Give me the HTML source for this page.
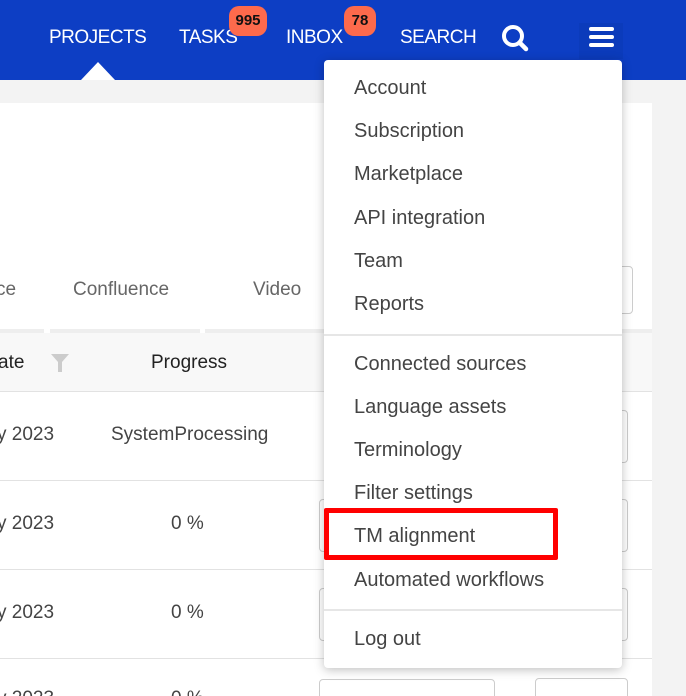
<!DOCTYPE html>
<html style="overflow:hidden;height:696px"><head><style>
html,body{height:696px}
body{margin:0;width:686px;overflow:hidden;background:#f3f3f3;font-family:"Liberation Sans",sans-serif;position:relative}
.hdr{position:absolute;left:0;top:0;width:686px;height:80px;background:#0d3ec4}
.n{position:absolute;top:27px;color:#fff;font-size:19px}
.badge{position:absolute;background:#fd6a4c;color:#111;font-size:15px;font-weight:bold;border-radius:10px;height:30px;line-height:30px;text-align:center}
.card{position:absolute;left:0;top:103px;width:652px;height:593px;background:#fff}
.t{position:absolute;font-size:19px;color:#666}
.row{position:absolute;left:0;width:652px;border-top:1px solid #e2e2e2}
.c{position:absolute;font-size:19px;color:#444}
.btn{position:absolute;border:1px solid #ccc;border-radius:4px;background:#fff}
.menu{position:absolute;left:324px;top:60px;width:298px;height:608px;background:#fff;border-radius:4px;box-shadow:0 2px 10px rgba(0,0,0,.25)}
.mi{position:absolute;left:30px;font-size:20px;color:#444}
.div{position:absolute;left:0;width:298px;border-top:2px solid #e6e6e6}
</style></head><body>
<div class="hdr">
<div class="n" style="left:49px;letter-spacing:-0.5px">PROJECTS</div>
<div class="n" style="left:179px;letter-spacing:-0.5px">TASKS</div>
<div class="badge" style="left:229px;top:6px;width:38px">995</div>
<div class="n" style="left:286px;letter-spacing:-0.5px">INBOX</div>
<div class="badge" style="left:344px;top:6px;width:32px">78</div>
<div class="n" style="left:400px;letter-spacing:-0.5px">SEARCH</div>
<svg style="position:absolute;left:498px;top:21px" width="34" height="34" viewBox="0 0 34 34"><circle cx="15" cy="15" r="9" fill="none" stroke="#fff" stroke-width="4"/><line x1="21.5" y1="21.5" x2="28" y2="28" stroke="#fff" stroke-width="4.5" stroke-linecap="round"/></svg>
<div style="position:absolute;left:579px;top:23px;width:44px;height:36px;background:#0b3bbb"></div>
<div style="position:absolute;left:589px;top:27px;width:25px;height:4px;background:#fff;border-radius:2px"></div>
<div style="position:absolute;left:589px;top:35px;width:25px;height:4px;background:#fff;border-radius:2px"></div>
<div style="position:absolute;left:589px;top:43px;width:25px;height:4px;background:#fff;border-radius:2px"></div>
<div style="position:absolute;left:81px;top:62px;width:0;height:0;border-left:17px solid transparent;border-right:17px solid transparent;border-bottom:18px solid #fff"></div>
</div>
<div class="card"></div>
<div class="t" style="left:-4px;top:279px">ce</div>
<div class="t" style="left:73px;top:279px">Confluence</div>
<div class="t" style="left:253px;top:279px">Video</div>
<div style="position:absolute;left:0;top:329px;width:44px;height:4px;background:#eee"></div>
<div style="position:absolute;left:50px;top:329px;width:150px;height:4px;background:#eee"></div>
<div style="position:absolute;left:205px;top:329px;width:447px;height:4px;background:#eee"></div>
<div class="btn" style="left:560px;top:266px;width:71px;height:46px"></div>
<div style="position:absolute;left:0;top:333px;width:652px;height:58px;background:#f8f8f8"></div>
<div class="c" style="left:-2px;top:352px;color:#222">ate</div>
<svg style="position:absolute;left:50px;top:353px" width="20" height="20"><path d="M1 1H19L12 9V19H8V9Z" fill="#ccc"/></svg>
<div class="c" style="left:151px;top:352px;color:#222">Progress</div>
<div class="row" style="top:391px"></div>
<div class="row" style="top:480px"></div>
<div class="row" style="top:569px"></div>
<div class="row" style="top:658px"></div>
<div class="c" style="left:-3px;top:424px">y 2023</div><div class="c" style="left:111px;top:424px">SystemProcessing</div>
<div class="c" style="left:-3px;top:513px">y 2023</div><div class="c" style="left:171px;top:513px">0 %</div>
<div class="c" style="left:-3px;top:602px">y 2023</div><div class="c" style="left:171px;top:602px">0 %</div>
<div class="c" style="left:-3px;top:688px">y 2023</div><div class="c" style="left:171px;top:688px">0 %</div>
<div class="btn" style="left:560px;top:410px;width:66px;height:51px"></div>
<div class="btn" style="left:560px;top:499px;width:66px;height:51px"></div>
<div class="btn" style="left:560px;top:588px;width:66px;height:51px"></div>
<div class="btn" style="left:319px;top:588px;width:20px;height:51px"></div>
<div class="btn" style="left:319px;top:499px;width:20px;height:51px"></div>
<div class="btn" style="left:319px;top:679px;width:174px;height:40px"></div>
<div class="btn" style="left:535px;top:678px;width:91px;height:40px"></div>
<div class="menu">
<div class="mi" style="top:17px">Account</div>
<div class="mi" style="top:60px">Subscription</div>
<div class="mi" style="top:103px">Marketplace</div>
<div class="mi" style="top:147px">API integration</div>
<div class="mi" style="top:190px">Team</div>
<div class="mi" style="top:233px">Reports</div>
<div class="div" style="top:274px"></div>
<div class="mi" style="top:293px">Connected sources</div>
<div class="mi" style="top:336px">Language assets</div>
<div class="mi" style="top:379px">Terminology</div>
<div class="mi" style="top:422px">Filter settings</div>
<div class="mi" style="top:465px">TM alignment</div>
<div class="mi" style="top:509px">Automated workflows</div>
<div class="div" style="top:549px"></div>
<div class="mi" style="top:568px">Log out</div>
</div>
<div style="position:absolute;left:324px;top:508px;width:224px;height:42px;border:5px solid #f00;border-radius:2px"></div>
</body></html>
